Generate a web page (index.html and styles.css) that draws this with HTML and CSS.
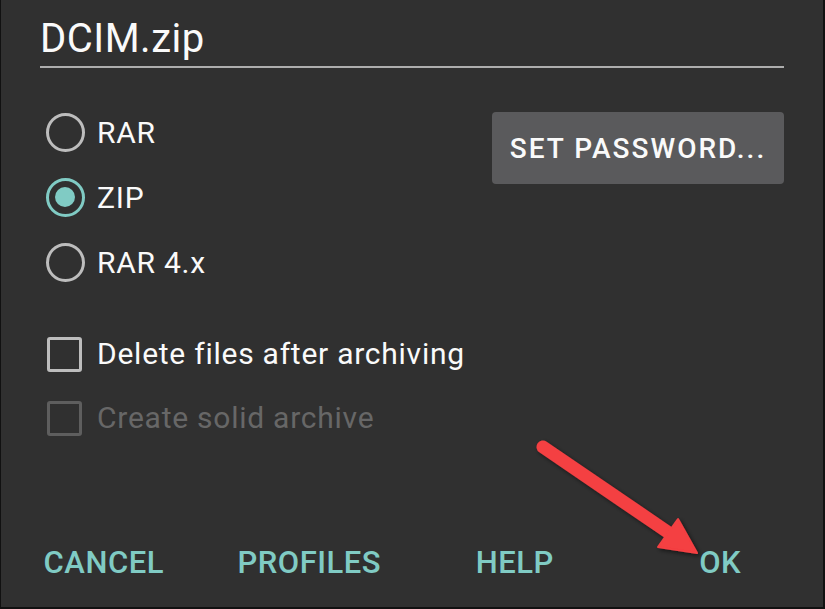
FILE: index.html
```html
<!DOCTYPE html>
<html lang="en">
<head>
    <meta charset="UTF-8">
    <meta name="viewport" content="width=device-width, initial-scale=1.0">
    <title>Archive name and parameters</title>
    <link rel="stylesheet" href="styles.css">
</head>
<body>
    <div class="dialog">
        <div class="content">
            <div class="title">DCIM.zip</div>

            <div class="format-row">
                <div class="radio-list">
                    <label class="radio"><span class="radio-mark"></span>RAR</label>
                    <label class="radio checked"><span class="radio-mark"></span>ZIP</label>
                    <label class="radio"><span class="radio-mark"></span>RAR 4.x</label>
                </div>
                <button class="password-btn">SET PASSWORD...</button>
            </div>

            <div class="checks">
                <label class="check"><span class="check-box"></span>Delete files after archiving</label>
                <label class="check disabled"><span class="check-box"></span>Create solid archive</label>
            </div>
        </div>

        <div class="actions">
            <button class="action">CANCEL</button>
            <button class="action">PROFILES</button>
            <button class="action">HELP</button>
            <button class="action">OK</button>
        </div>

        <!-- annotation arrow pointing at OK -->
        <svg class="arrow" viewBox="0 0 825 609" width="825" height="609">
            <defs>
                <filter id="shadow" x="-10%" y="-10%" width="130%" height="130%">
                    <feDropShadow dx="2" dy="2" stdDeviation="2" flood-color="#000" flood-opacity="0.55"/>
                </filter>
            </defs>
            <g filter="url(#shadow)" fill="#f43f42" stroke="#f43f42">
                <line x1="543" y1="447" x2="672" y2="535" stroke-width="13" stroke-linecap="round"/>
                <polygon points="697,553 678,519 658,547" stroke-width="2" stroke-linejoin="round"/>
            </g>
        </svg>
    </div>
</body>
</html>
```

FILE: styles.css
```css
body {
    margin: 0;
    background-color: #000;
    font-family: Roboto, "Noto Sans", Arial, sans-serif;
}

.dialog {
    position: relative;
    width: 825px;
    height: 609px;
    box-sizing: border-box;
    background-color: #303030;
    border-left: 1px solid #111;
    border-right: 2px solid #111;
    border-bottom: 2px solid #111;
    display: flex;
    flex-direction: column;
    color: #fafafa;
}

.content {
    padding: 0 39px;
}

.title {
    padding-top: 16px;
    padding-bottom: 4px;
    font-size: 40px;
    letter-spacing: 0.5px;
    line-height: 46px;
    border-bottom: 2px solid #adadad;
}

.format-row {
    display: flex;
    justify-content: space-between;
    align-items: flex-start;
    margin-top: 32px;
}

.radio-list {
    display: flex;
    flex-direction: column;
}

.radio {
    display: flex;
    align-items: center;
    gap: 12px;
    height: 65px;
    padding-left: 6px;
    font-size: 30px;
    letter-spacing: 0.75px;
    line-height: 40px;
}

.radio-mark {
    position: relative;
    width: 39px;
    height: 39px;
    box-sizing: border-box;
    border: 3.5px solid #bdbdbd;
    border-radius: 50%;
}

.radio.checked .radio-mark {
    border-color: #80cbc4;
}

.radio.checked .radio-mark::after {
    content: "";
    position: absolute;
    left: 6px;
    top: 6px;
    width: 20px;
    height: 20px;
    border-radius: 50%;
    background-color: #80cbc4;
}

.password-btn {
    margin-top: 12px;
    width: 292px;
    height: 72px;
    padding: 0;
    border: none;
    border-radius: 4px;
    background-color: #5a5a5c;
    color: #fafafa;
    font-family: inherit;
    font-size: 28px;
    font-weight: 500;
    letter-spacing: 2px;
}

.checks {
    margin-top: 27px;
}

.check {
    display: flex;
    align-items: center;
    gap: 15px;
    height: 64px;
    padding-left: 7px;
    font-size: 30px;
    letter-spacing: 0.75px;
    line-height: 40px;
}

.check-box {
    width: 35px;
    height: 35px;
    box-sizing: border-box;
    border: 3px solid #bdbdbd;
    border-radius: 3px;
}

.check.disabled {
    color: #676767;
}

.check.disabled .check-box {
    border-color: #5e5e5e;
}

.actions {
    margin-top: auto;
    padding-bottom: 24px;
    display: grid;
    grid-template-columns: repeat(4, 1fr);
}

.action {
    height: 40px;
    padding: 0;
    border: none;
    background: none;
    color: #80cbc4;
    font-family: inherit;
    font-size: 31px;
    font-weight: 500;
    letter-spacing: 0.5px;
    line-height: 40px;
    text-align: center;
}

.arrow {
    position: absolute;
    left: -1px;
    top: 0;
    pointer-events: none;
}
```
